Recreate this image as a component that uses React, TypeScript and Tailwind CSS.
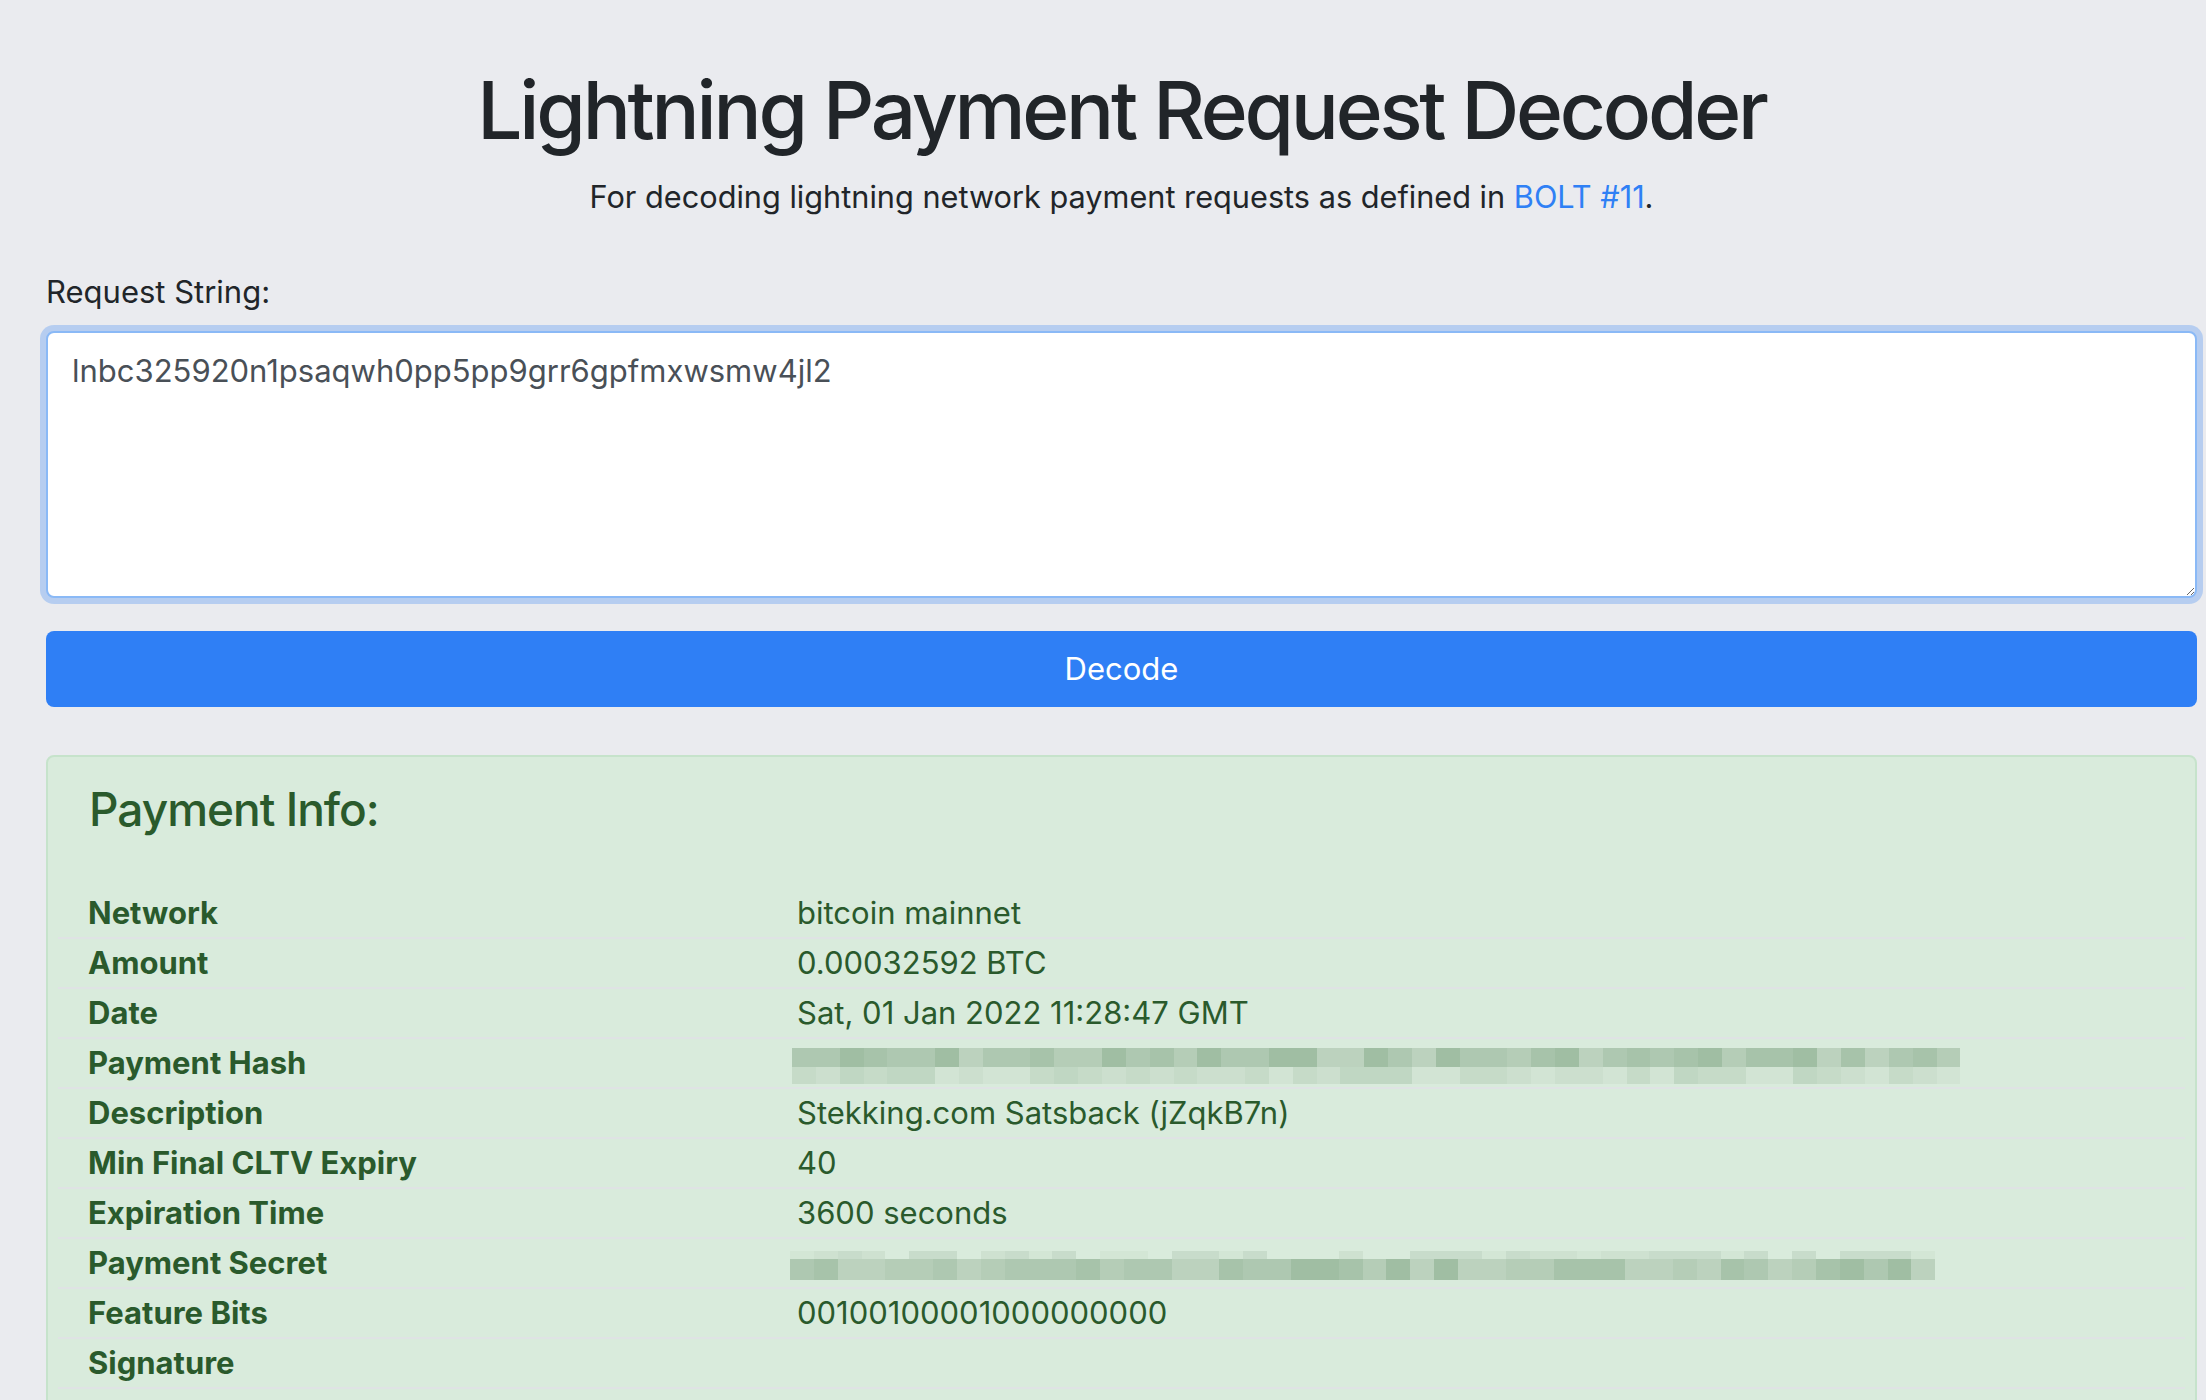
import React from "react";

const rows: { label: string; value?: string; blur?: "hash" | "secret" }[] = [
  { label: "Network", value: "bitcoin mainnet" },
  { label: "Amount", value: "0.00032592 BTC" },
  { label: "Date", value: "Sat, 01 Jan 2022 11:28:47 GMT" },
  { label: "Payment Hash", blur: "hash" },
  { label: "Description", value: "Stekking.com Satsback (jZqkB7n)" },
  { label: "Min Final CLTV Expiry", value: "40" },
  { label: "Expiration Time", value: "3600 seconds" },
  { label: "Payment Secret", blur: "secret" },
  { label: "Feature Bits", value: "00100100001000000000" },
  { label: "Signature", value: "" },
];

// pixelated (redacted) values
const dark = ["bg-[#a0bea3]", "bg-[#a7c3aa]", "bg-[#aec8b1]", "bg-[#b5cdb7]", "bg-[#bcd2be]"];
const light = ["bg-[#c0d7c3]", "bg-[#c6dbc8]", "bg-[#ccdfce]", "bg-[#d2e4d4]"];
const sparse = ["bg-transparent", "bg-[#c8dccb]", "bg-[#cee1d0]", "bg-[#d3e6d5]", "bg-[#c8dccb]"];

function rng(seed: number) {
  let s = seed;
  return () => {
    s = (s * 9301 + 49297) % 233280;
    return s / 233280;
  };
}

function Pixels({ count, palette, seed, height }: { count: number; palette: string[]; seed: number; height: string }) {
  const r = rng(seed);
  return (
    <div className={`flex ${height}`}>
      {Array.from({ length: count }).map((_, i) => (
        <div key={i} className={`flex-1 ${palette[Math.floor(r() * palette.length)]}`} />
      ))}
    </div>
  );
}

function Blurred({ kind }: { kind: "hash" | "secret" }) {
  if (kind === "hash") {
    return (
      <div className="ml-[-5px] pt-[9px] w-[1168px]">
        <Pixels count={49} palette={dark} seed={7} height="h-[19px]" />
        <Pixels count={49} palette={light} seed={31} height="h-[17px]" />
      </div>
    );
  }
  return (
    <div className="ml-[-7px] pt-[12px] w-[1145px]">
      <Pixels count={48} palette={sparse} seed={13} height="h-[8px]" />
      <Pixels count={48} palette={dark} seed={57} height="h-[21px]" />
    </div>
  );
}

export default function App() {
  return (
    <div className="min-h-screen bg-[#eaebef] font-['Inter',sans-serif] pl-[46px] pr-[9px] pt-[62px] pb-[60px]">
      <h1 className="text-center text-[80px] leading-[1.2] font-medium text-[#212529] tracking-[-3.2px]">
        Lightning Payment Request Decoder
      </h1>
      <p className="mt-[18px] text-center text-[30.7px] leading-[42px] text-[#212529]">
        For decoding lightning network payment requests as defined in{" "}
        <a className="text-[#2f80f5]">BOLT #11</a>.
      </p>

      <label className="block mt-[51px] text-[31px] leading-[45px] text-[#212529]">Request String:</label>
      <textarea
        className="block mt-[17px] w-full h-[267px] bg-white border-2 border-[#8ab9f6] rounded-[8px] shadow-[0_0_0_6px_rgba(47,128,245,0.28)] px-[24px] pt-[15px] text-[31px] leading-[45px] text-[#495057] outline-none resize-y"
        defaultValue="lnbc325920n1psaqwh0pp5pp9grr6gpfmxwsmw4jl2"
      />
      <button className="mt-[33px] w-full h-[76px] rounded-[8px] bg-[#2f7ff5] text-white text-[31px]">Decode</button>

      <div className="mt-[48px] border-2 border-[#c6e3cb] bg-[#d9ebdc] rounded-[8px] px-[10px] pt-[25px] pb-[40px] text-[#2a5a2c]">
        <h4 className="ml-[31px] text-[46px] leading-[1.2] font-medium tracking-[-1px]">Payment Info:</h4>
        <div className="mt-[52px]">
          {rows.map((row) => (
            <div key={row.label} className="grid grid-cols-[1fr_2fr] border-b-2 border-[#dfe3e4]">
              <div className="pl-[30px] h-[48px] text-[31px] leading-[48px] font-bold">{row.label}</div>
              <div className="pl-[30px] h-[48px] text-[31px] leading-[48px]">
                {row.blur ? <Blurred kind={row.blur} /> : row.value}
              </div>
            </div>
          ))}
        </div>
      </div>
    </div>
  );
}
